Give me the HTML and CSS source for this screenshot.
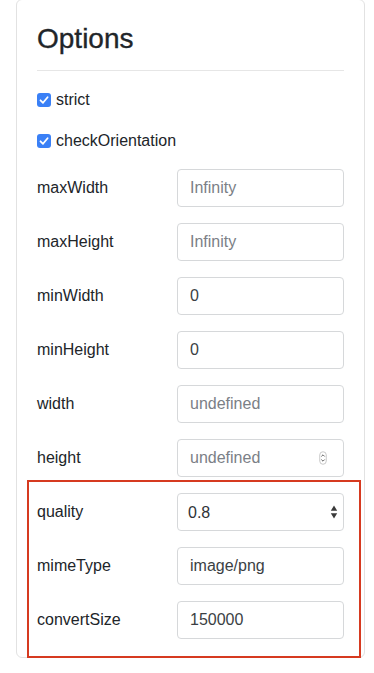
FILE: index.html
```html
<!DOCTYPE html>
<html>
<head>
<meta charset="utf-8">
<link rel="stylesheet" href="styles.css">
</head>
<body>
<div class="card">
  <h3 class="title">Options</h3>
  <hr class="rule">
  <label class="check"><span class="box"><svg viewBox="0 0 14 14" width="14" height="14"><path d="M3.5 7.3 L6 9.8 L10.6 4.2" fill="none" stroke="#fff" stroke-width="1.8" stroke-linecap="round" stroke-linejoin="round"/></svg></span>strict</label>
  <label class="check"><span class="box"><svg viewBox="0 0 14 14" width="14" height="14"><path d="M3.5 7.3 L6 9.8 L10.6 4.2" fill="none" stroke="#fff" stroke-width="1.8" stroke-linecap="round" stroke-linejoin="round"/></svg></span>checkOrientation</label>
  <div class="row"><span class="lbl">maxWidth</span><input class="field" placeholder="Infinity"></div>
  <div class="row"><span class="lbl">maxHeight</span><input class="field" placeholder="Infinity"></div>
  <div class="row"><span class="lbl">minWidth</span><input class="field" value="0"></div>
  <div class="row"><span class="lbl">minHeight</span><input class="field" value="0"></div>
  <div class="row"><span class="lbl">width</span><input class="field" placeholder="undefined"></div>
  <div class="row"><span class="lbl">height</span><div class="wrap"><input class="field" placeholder="undefined"><svg class="spin" viewBox="0 0 8 14" width="8" height="14"><rect x="0.75" y="0.75" width="6.5" height="12.5" rx="3.2" fill="#fff" stroke="#c8c8c8" stroke-width="1"/><path d="M2.6 5.2 L4 3.8 L5.4 5.2 M2.6 8.8 L4 10.2 L5.4 8.8" fill="none" stroke="#555" stroke-width="0.9" stroke-linecap="round" stroke-linejoin="round"/></svg></div></div>
  <div class="row"><span class="lbl">quality</span><div class="wrap"><select class="field sel"><option>0.8</option></select><svg class="arrows" viewBox="0 0 8 14" width="8" height="14"><path d="M4 0.5 L7.2 5.8 L0.8 5.8 Z M4 13.5 L7.2 8.2 L0.8 8.2 Z" fill="#3a3a3a"/></svg></div></div>
  <div class="row"><span class="lbl">mimeType</span><input class="field" value="image/png"></div>
  <div class="row last"><span class="lbl">convertSize</span><input class="field" value="150000"></div>
</div>
<div class="mark"></div>
</body>
</html>
```
FILE: styles.css
```css
html, body {
  margin: 0;
  padding: 0;
  background: #fff;
}
body {
  font-family: "Liberation Sans", Arial, sans-serif;
  color: #212529;
  font-size: 16px;
  line-height: 24px;
  width: 374px;
  height: 673px;
  overflow: hidden;
}
.card {
  margin: -1px 0 0 16px;
  width: 307px;
  padding: 22px 20px 18px 20px;
  border: 1px solid #e2e2e2;
  border-radius: 6px;
}
.title {
  margin: 0;
  font-size: 28px;
  line-height: 34px;
  font-weight: 400;
  -webkit-text-stroke: 0.35px #212529;
  color: #212529;
}
.rule {
  margin: 14px 0 17px 0;
  border: 0;
  border-top: 1px solid #e6e6e6;
  height: 0;
}
.check {
  display: flex;
  align-items: center;
  height: 24px;
  margin-bottom: 17px;
}
.check + .check {
  margin-bottom: 16px;
}
.box {
  width: 14px;
  height: 14px;
  border-radius: 3px;
  background: #3a80f6;
  margin-right: 5px;
  display: flex;
}
.row {
  display: grid;
  grid-template-columns: 140px 1fr;
  align-items: center;
  margin-bottom: 16px;
}
.row.last {
  margin-bottom: 0;
}
.lbl {
  font-size: 16px;
}
.wrap {
  position: relative;
}
.field {
  box-sizing: border-box;
  width: 100%;
  height: 38px;
  padding: 0 12px;
  border: 1px solid #d6d8da;
  border-radius: 4px;
  font-family: "Liberation Sans", Arial, sans-serif;
  font-size: 16px;
  color: #3b3f44;
  background: #fff;
  outline: none;
  display: block;
}
.field::placeholder {
  color: #7b8086;
}
.sel {
  appearance: none;
  -webkit-appearance: none;
  padding-left: 10px;
  color: #2f3337;
}
.spin {
  position: absolute;
  right: 17px;
  top: 12px;
}
.arrows {
  position: absolute;
  right: 6px;
  top: 12px;
}
.mark {
  position: absolute;
  left: 27px;
  top: 480px;
  width: 330px;
  height: 174px;
  border: 2px solid #d63a20;
}
```
